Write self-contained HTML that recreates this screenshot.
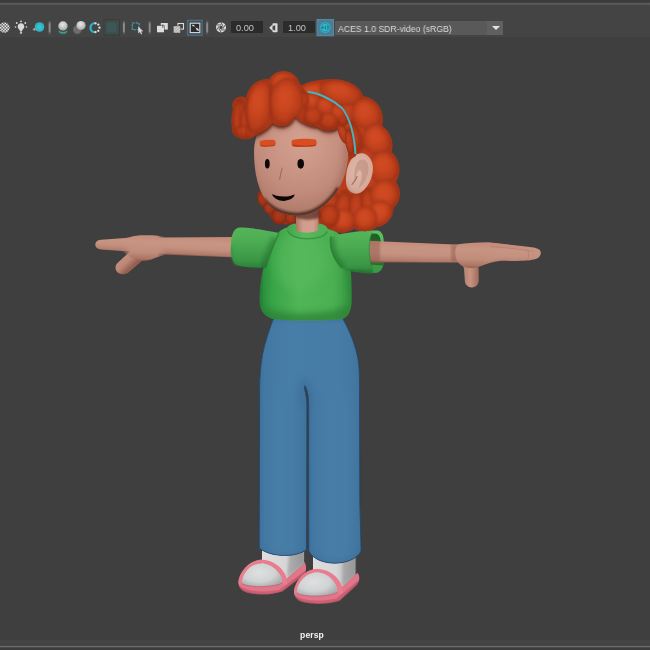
<!DOCTYPE html>
<html>
<head>
<meta charset="utf-8">
<title>persp</title>
<style>
html,body{margin:0;padding:0;}
body{width:650px;height:650px;overflow:hidden;background:#3f3f3f;position:relative;font-family:"Liberation Sans",sans-serif;}
#top0{position:absolute;left:0;top:0;width:650px;height:3px;background:#3b3b3b;}
#top1{position:absolute;left:0;top:2px;width:650px;height:4px;background:linear-gradient(#3b3b3b 0,#4a4a4a 25%,#626262 45%,#565656 65%,#444 100%);}
#bar{position:absolute;left:0;top:5px;width:650px;height:32px;background:#444444;}
#botline{position:absolute;left:0;top:644px;width:650px;height:6px;background:linear-gradient(#404040 0,#404040 16%,#4e4e4e 30%,#6a6a6a 42%,#4c4c4c 58%,#3c3c3c 70%,#3c3c3c 100%);}
#bot2{position:absolute;left:0;top:640px;width:650px;height:4px;background:#444444;}
.fld{position:absolute;top:21px;height:12px;background:#2b2b2b;color:#c4c4c4;font-size:9.2px;line-height:12px;border-radius:1px;}
.fld span{position:absolute;top:0.5px;will-change:transform;}
#aces{position:absolute;left:335px;top:21px;width:152px;height:14px;background:#595959;color:#dcdcdc;font-size:9.3px;line-height:14px;}
#aces span{position:absolute;left:3px;top:0.5px;white-space:nowrap;transform:scaleX(0.932);transform-origin:0 50%;will-change:transform;}
#drop{position:absolute;left:487px;top:21px;width:16px;height:14px;background:#606060;}
#drop i{position:absolute;left:4.5px;top:4.5px;width:0;height:0;border-left:4px solid transparent;border-right:4px solid transparent;border-top:4.5px solid #e4e4e4;}
#persp{position:absolute;left:262px;top:629.300px;will-change:transform;width:100px;text-align:center;color:#f2f2f2;font-weight:bold;font-size:8.6px;line-height:12px;letter-spacing:0.1px;}
svg{position:absolute;left:0;top:0;}
</style>
</head>
<body>
<div id="top0"></div><div id="top1"></div><div id="bar"></div>
<div id="bot2"></div><div id="botline"></div>

<div class="fld" style="left:231px;width:32px;"><span style="left:4.5px;">0.00</span></div>
<div class="fld" style="left:283px;width:32px;"><span style="left:5px;">1.00</span></div>
<div id="aces"><span>ACES 1.0 SDR-video (sRGB)</span></div>
<div id="drop"><i></i></div>
<div id="persp">persp</div>

<!-- TOOLBAR ICONS -->
<svg id="icons" width="650" height="40" viewBox="0 0 650 40">
<!--ICONS-->
<defs>
<pattern id="chk" x="0" y="0" width="3" height="3" patternUnits="userSpaceOnUse"><rect width="3" height="3" fill="#6a6a6a"/><rect width="1.5" height="1.5" fill="#e6e6e6"/><rect x="1.5" y="1.5" width="1.5" height="1.5" fill="#e6e6e6"/></pattern>
<radialGradient id="sph" cx="0.45" cy="0.35" r="0.7"><stop offset="0" stop-color="#e8e8e8"/><stop offset="0.7" stop-color="#b8b8b8"/><stop offset="1" stop-color="#8a8a8a"/></radialGradient>
<linearGradient id="sepg" x1="0" y1="0" x2="0" y2="1"><stop offset="0" stop-color="#6a6a6a" stop-opacity="0"/><stop offset="0.25" stop-color="#8c8c8c"/><stop offset="0.75" stop-color="#8c8c8c"/><stop offset="1" stop-color="#6a6a6a" stop-opacity="0"/></linearGradient>
</defs>
<!-- checker circle -->
<circle cx="4.5" cy="27.5" r="5.2" fill="url(#chk)"/>
<!-- light bulb -->
<g fill="#d8d8d8">
<path d="M21 23.3c-2 0-3.3 1.5-3.3 3.2 0 1.300.7 2.100 1.500 2.900 0.500 0.500 0.700 1.100 0.700 1.800h2.200c0-0.700 0.200-1.300 0.700-1.800 0.800-0.800 1.500-1.600 1.500-2.900 0-1.700-1.300-3.200-3.300-3.200z"/>
<rect x="19.9" y="31.6" width="2.200" height="2.200" rx="0.500" fill="#bdbdbd"/>
<circle cx="21" cy="21.300" r="0.900"/><circle cx="16.700" cy="23" r="0.900"/><circle cx="25.300" cy="23" r="0.900"/><circle cx="15.500" cy="27" r="0.800"/><circle cx="26.500" cy="27" r="0.800"/>
</g>
<!-- teal circle w/ brush -->
<path d="M32.300 29.200l3.500 -1.800 1.500 1.800 -3 1.600z" fill="#c89a84"/>
<circle cx="39.500" cy="27" r="4.800" fill="#2db4c4"/>
<circle cx="39.500" cy="27" r="2.600" fill="#38c2d0"/>
<!-- separators -->
<g fill="url(#sepg)">
<rect x="48.600" y="20" width="2" height="15"/>
<rect x="122.900" y="20" width="2" height="15"/>
<rect x="148.700" y="20" width="2" height="15"/>
<rect x="206.200" y="20" width="2" height="15"/>
</g>
<!-- sphere with teal base -->
<path d="M58.300 30.300q4.700 3.600 9.400 0l-1.200 2.600q-3.500 1.800-7 0z" fill="#3a9a94"/>
<circle cx="63" cy="26" r="4.700" fill="url(#sph)"/>
<!-- sphere with shadow -->
<circle cx="77.300" cy="29.700" r="4.200" fill="#6c6c6c"/>
<circle cx="81" cy="25.500" r="4.600" fill="url(#sph)"/>
<!-- teal ring -->
<path d="M95 23.200a4.500 4.500 0 0 0 0 9" fill="none" stroke="#2db4c4" stroke-width="2.300"/>
<g fill="#e4e4e4"><circle cx="95.600" cy="23.300" r="1.150"/><circle cx="98.300" cy="24.600" r="1.150"/><circle cx="99.500" cy="27.700" r="1.150"/><circle cx="98.300" cy="30.800" r="1.150"/><circle cx="95.600" cy="32.100" r="1.150"/></g>
<!-- dark teal square -->
<rect x="104" y="19.800" width="15.500" height="15.500" fill="#3d4c4c" stroke="#3a3a3a" stroke-width="1"/>
<rect x="107" y="23" width="9.500" height="9" fill="#3f5656"/>
<!-- dashed select + cursor -->
<rect x="132.300" y="23" width="6.800" height="6.800" fill="none" stroke="#3fb4bc" stroke-width="1.100" stroke-dasharray="2.200 1.200"/>
<path d="M138.200 26.400l0 7.200 1.700 -1.600 1.200 2.400 1.100 -0.600 -1.200 -2.300 2.300 -0.200z" fill="#d6d6d6"/>
<!-- overlap squares 1 -->
<rect x="160.800" y="23" width="7" height="6.600" fill="#dedede"/>
<rect x="156.500" y="25.300" width="8" height="7.400" fill="#444"/>
<rect x="157" y="25.800" width="7" height="6.500" fill="#dedede"/>
<rect x="162.400" y="24.300" width="0.900" height="3.600" fill="#555"/>
<!-- overlap squares 2 -->
<rect x="177.900" y="23.500" width="5.600" height="5.600" fill="none" stroke="#dcdcdc" stroke-width="1.100"/>
<rect x="173.200" y="25.700" width="7.500" height="7.500" fill="#444"/>
<rect x="173.700" y="26.200" width="6.500" height="6.500" fill="#cdcdcd"/>
<rect x="173.700" y="26.200" width="6.500" height="6.500" fill="url(#chk)" opacity="0.350"/>
<!-- boxed selected icon -->
<rect x="187.500" y="20.400" width="14.600" height="14.800" fill="#3d4c56" stroke="#50708240" stroke-width="0"/>
<rect x="187.500" y="20.400" width="14.600" height="14.800" fill="none" stroke="#4f6e80" stroke-width="1.300"/>
<rect x="190.200" y="23.200" width="9.600" height="9.400" fill="#2b2b2b" stroke="#dadada" stroke-width="1.100"/>
<path d="M191.800 24.800l3 0.200 -0.900 0.900 2.300 2.300 0.900 -0.400 1.600 1.600 0.300 1.500 -1.500 -0.300 -1.600 -1.600 0.400 -0.900 -2.300 -2.300 -0.900 0.900z" fill="#e2e2e2"/>
<!-- aperture -->
<circle cx="221" cy="27.400" r="5" fill="#dadada"/>
<g stroke="#444" stroke-width="0.800" fill="none">
<path d="M221 22.400l2.200 4.200M225.300 24.900l-2.600 4M225.300 29.900l-4.700 0M221 32.400l-2.200 -4.200M216.700 29.900l2.600 -4M216.700 24.900l4.700 0"/>
</g>
<circle cx="221" cy="27.400" r="1.600" fill="#444"/>
<!-- gamma half -->
<path d="M269.200 27.800l3.300 -3.300 0 6.600z" fill="#dadada"/>
<rect x="272.500" y="23.300" width="5" height="9" rx="0.800" fill="#dadada"/>
<path d="M275.200 25.200a2.600 2.600 0 0 0 0 5.200z" fill="#444"/>
<!-- teal circle button -->
<rect x="317" y="19.500" width="16.500" height="16.300" fill="#4a7d96" stroke="#5e93ac" stroke-width="0.800"/>
<circle cx="325.200" cy="27.600" r="5.300" fill="#35b9c9"/>
<circle cx="325.200" cy="27.600" r="4.200" fill="none" stroke="#1f7f92" stroke-width="0.700"/>
<g fill="#1c6f82"><circle cx="322.800" cy="27.600" r="1.100"/><rect x="324.800" y="25.600" width="0.900" height="4"/><path d="M326.700 25.600a2 2 0 0 1 0 4l0 -0.900a1.100 1.100 0 0 0 0 -2.200z"/></g>
<!--/ICONS-->
</svg>

<!-- CHARACTER -->
<svg id="char" width="650" height="650" viewBox="0 0 650 650">
<defs>
<!--DEFS-->
<filter id="b1" x="-10%" y="-10%" width="120%" height="120%"><feGaussianBlur stdDeviation="1"/></filter>
<filter id="b2" x="-30%" y="-30%" width="160%" height="160%"><feGaussianBlur stdDeviation="2"/></filter>
<filter id="b3" x="-30%" y="-30%" width="160%" height="160%"><feGaussianBlur stdDeviation="3.2"/></filter>
<filter id="b5" x="-40%" y="-40%" width="180%" height="180%"><feGaussianBlur stdDeviation="5"/></filter>
<filter id="b05" x="-20%" y="-20%" width="140%" height="140%"><feGaussianBlur stdDeviation="0.5"/></filter>
<radialGradient id="hg" cx="0.5" cy="0.5" r="0.5" fx="0.36" fy="0.32"><stop offset="0" stop-color="#d04a22"/><stop offset="0.5" stop-color="#c8441e"/><stop offset="0.85" stop-color="#b53b1a"/><stop offset="1" stop-color="#a03317"/></radialGradient>
<radialGradient id="hg2" cx="0.5" cy="0.5" r="0.5" fx="0.4" fy="0.35"><stop offset="0" stop-color="#c4421d"/><stop offset="0.6" stop-color="#b53b1a"/><stop offset="1" stop-color="#982f15"/></radialGradient>
<radialGradient id="faceg" cx="0.5" cy="0.3" r="0.75"><stop offset="0" stop-color="#d3a08f"/><stop offset="0.35" stop-color="#cb9685"/><stop offset="0.65" stop-color="#c18b7b"/><stop offset="0.88" stop-color="#b07c6c"/><stop offset="1" stop-color="#9c6a5c"/></radialGradient>
<linearGradient id="armL" gradientUnits="userSpaceOnUse" x1="200" y1="236.500" x2="199" y2="257"><stop offset="0" stop-color="#c48a78"/><stop offset="0.3" stop-color="#c89583"/><stop offset="0.6" stop-color="#c49180"/><stop offset="0.88" stop-color="#b07a69"/><stop offset="1" stop-color="#744438"/></linearGradient>
<linearGradient id="armR" gradientUnits="userSpaceOnUse" x1="420" y1="241.500" x2="419.500" y2="264"><stop offset="0" stop-color="#c48a78"/><stop offset="0.3" stop-color="#c89583"/><stop offset="0.6" stop-color="#c49180"/><stop offset="0.88" stop-color="#b07a69"/><stop offset="1" stop-color="#744438"/></linearGradient>
<linearGradient id="neckg" x1="0" y1="0" x2="1" y2="0"><stop offset="0" stop-color="#a87463"/><stop offset="0.3" stop-color="#cf9d8c"/><stop offset="0.75" stop-color="#d2a08f"/><stop offset="1" stop-color="#b98675"/></linearGradient>
<linearGradient id="torsog" x1="0" y1="0" x2="1" y2="0"><stop offset="0" stop-color="#27883a"/><stop offset="0.14" stop-color="#38a447"/><stop offset="0.42" stop-color="#50b556"/><stop offset="0.8" stop-color="#4bb052"/><stop offset="1" stop-color="#33973f"/></linearGradient>
<linearGradient id="slvg" x1="0" y1="0" x2="0" y2="1"><stop offset="0" stop-color="#55b55a"/><stop offset="0.35" stop-color="#4bac52"/><stop offset="0.8" stop-color="#3b9745"/><stop offset="1" stop-color="#2a8237"/></linearGradient>
<linearGradient id="legg" x1="0" y1="0" x2="1" y2="0"><stop offset="0" stop-color="#2c5880"/><stop offset="0.1" stop-color="#3c6f98"/><stop offset="0.4" stop-color="#4b83ad"/><stop offset="0.72" stop-color="#467ca6"/><stop offset="0.93" stop-color="#396a93"/><stop offset="1" stop-color="#2b547b"/></linearGradient>
<radialGradient id="toeg" cx="0.42" cy="0.4" r="0.65"><stop offset="0" stop-color="#dfe1e1"/><stop offset="0.6" stop-color="#d0d3d3"/><stop offset="1" stop-color="#a9adad"/></radialGradient>
<linearGradient id="sockg" x1="0" y1="0" x2="1" y2="0"><stop offset="0" stop-color="#dedede"/><stop offset="0.55" stop-color="#d6d6d6"/><stop offset="1" stop-color="#a2a2a2"/></linearGradient>
<linearGradient id="thL" gradientUnits="userSpaceOnUse" x1="117" y1="258" x2="128" y2="270"><stop offset="0" stop-color="#c89583"/><stop offset="0.6" stop-color="#bd8775"/><stop offset="1" stop-color="#94604f"/></linearGradient>
<linearGradient id="thR" gradientUnits="userSpaceOnUse" x1="464" y1="275" x2="480" y2="275"><stop offset="0" stop-color="#b58371"/><stop offset="0.4" stop-color="#c69381"/><stop offset="1" stop-color="#9a6655"/></linearGradient>
<linearGradient id="palmL" gradientUnits="userSpaceOnUse" x1="147" y1="235" x2="146" y2="261.500"><stop offset="0" stop-color="#c48a78"/><stop offset="0.25" stop-color="#c89583"/><stop offset="0.65" stop-color="#c18d7b"/><stop offset="0.9" stop-color="#aa7463"/><stop offset="1" stop-color="#8e5a4c"/></linearGradient>
<linearGradient id="palmR" gradientUnits="userSpaceOnUse" x1="478" y1="242.500" x2="477" y2="268.500"><stop offset="0" stop-color="#c48a78"/><stop offset="0.25" stop-color="#c89583"/><stop offset="0.65" stop-color="#c18d7b"/><stop offset="0.9" stop-color="#aa7463"/><stop offset="1" stop-color="#8e5a4c"/></linearGradient>
<linearGradient id="fadeL" gradientUnits="userSpaceOnUse" x1="122" y1="0" x2="167" y2="0"><stop offset="0" stop-color="#000"/><stop offset="0.22" stop-color="#fff"/><stop offset="0.78" stop-color="#fff"/><stop offset="1" stop-color="#000"/></linearGradient>
<mask id="palmLm" maskUnits="userSpaceOnUse" x="120" y="230" width="50" height="40"><rect x="120" y="230" width="50" height="40" fill="url(#fadeL)"/></mask>
<linearGradient id="fadeR" gradientUnits="userSpaceOnUse" x1="490" y1="0" x2="503" y2="0"><stop offset="0" stop-color="#fff"/><stop offset="1" stop-color="#000"/></linearGradient>
<mask id="palmRm" maskUnits="userSpaceOnUse" x="450" y="238" width="56" height="34"><rect x="450" y="238" width="56" height="34" fill="url(#fadeR)"/></mask>
<clipPath id="pantsclip"><use href="#pantsp"/></clipPath>
<linearGradient id="hipg" x1="0" y1="0" x2="1" y2="0"><stop offset="0" stop-color="#2c5880"/><stop offset="0.07" stop-color="#3c6f98"/><stop offset="0.3" stop-color="#4b83ad"/><stop offset="0.8" stop-color="#467ca6"/><stop offset="0.95" stop-color="#396a93"/><stop offset="1" stop-color="#2b547b"/></linearGradient>
<linearGradient id="hipfade" x1="0" y1="0" x2="0" y2="1"><stop offset="0" stop-color="#fff"/><stop offset="0.75" stop-color="#fff"/><stop offset="1" stop-color="#000"/></linearGradient>
<mask id="hipmask"><rect x="250" y="310" width="120" height="95" fill="url(#hipfade)"/></mask>
<clipPath id="torsoclip"><use href="#torsop"/></clipPath>
<clipPath id="lslvclip"><use href="#lslv"/></clipPath>
<clipPath id="rslvclip"><use href="#rslv"/></clipPath>
<radialGradient id="hl" cx="0.5" cy="0.5" r="0.5" fx="0.4" fy="0.36"><stop offset="0" stop-color="#d24c23"/><stop offset="0.5" stop-color="#c9451f"/><stop offset="0.8" stop-color="#b83d1b"/><stop offset="1" stop-color="#a33418"/></radialGradient>
<radialGradient id="hd" cx="0.5" cy="0.5" r="0.5" fx="0.42" fy="0.38"><stop offset="0" stop-color="#c4421d"/><stop offset="0.55" stop-color="#b63c1a"/><stop offset="1" stop-color="#952e14"/></radialGradient>
<clipPath id="backclip"><path d="M296,90 C300,84 312,80.500 324,79.500 C336,78.500 347,80 354,85 C359,88 362,92 363,96 A23.700,23.700 0 0 1 382,126 A23.600,23.600 0 0 1 391.500,152 A23.600,23.600 0 0 1 396,182 A19.400,19.400 0 0 1 393.500,208 A19.600,19.600 0 0 1 377,227 A20.600,20.600 0 0 1 354,228.500 A19,19 0 0 1 334,231 L318,225.500 L315,217 L315,203 L320,150 Z"/></clipPath>
<radialGradient id="hdd" cx="0.5" cy="0.5" r="0.5" fx="0.42" fy="0.38"><stop offset="0" stop-color="#b03a1a"/><stop offset="0.6" stop-color="#a03317"/><stop offset="1" stop-color="#852812"/></radialGradient>
<linearGradient id="colg" x1="0" y1="0" x2="1" y2="0"><stop offset="0" stop-color="#44a34b"/><stop offset="0.4" stop-color="#5ab95e"/><stop offset="1" stop-color="#4dae53"/></linearGradient>
<radialGradient id="earg" cx="0.45" cy="0.4" r="0.7"><stop offset="0" stop-color="#dfb8aa"/><stop offset="0.7" stop-color="#d6aa9b"/><stop offset="1" stop-color="#bd8d7d"/></radialGradient>
<clipPath id="faceclip"><use href="#facep"/></clipPath>
<clipPath id="frclip"><path d="M232,127 A40,40 0 0 1 233,109 A9,9 0 0 1 246,98 A22,22 0 0 1 269.500,79 A16.500,16.500 0 0 1 299,82 L306,92 C318,93 332,99 341,107 C346,112 349,116 349,119 A7,7 0 0 1 339,126.500 A16.400,16.400 0 0 1 318,127 A40,40 0 0 1 294.500,116.500 A14,14 0 0 1 272.500,123 A40,40 0 0 1 256.500,134.500 A16,16 0 0 1 238,137.500 A9,9 0 0 1 232,127 Z"/></clipPath>
</defs>
<!--CHAR-->
<path d="M370,230.500 L378,230.500 C382,231.500 383.800,236 383.700,241 L383.600,262 C383.600,267 381,271.500 377,272.800 L370,273.200 Z" fill="#1f5f28"/>
<path d="M371.500,230.500 L378,230.500 C382,231.500 383.800,236 383.700,241 L383.600,244 L380.800,244 C381,238.500 379.500,234.800 376.500,233.800 L371.500,233.600 Z" fill="#5cbc60"/>
<path d="M369,261 L383.600,262.500 C383.600,267 381,271.500 377,272.800 L370,273.200 Z" fill="#3d9946"/>
<path d="M369,261.500 L383.600,263 L383.600,265.500 L369,264.500 Z" fill="#1f5f28" opacity="0.700" filter="url(#b05)"/>
<g id="arms">
<path d="M131,250.500 L117.500,263 C114.600,265.800 115,270.400 118,272.800 C121.400,275.200 126.400,274.600 129.600,271.600 L143.500,259.500 Z" fill="url(#thL)"/>
<path d="M236,237 L160,237.600 L129,237.700 L101,239.700 C97,240 95.300,242.400 95.300,244.600 C95.300,247 97,249.200 101,249.500 L129,251.500 L160,254.600 L236,257.400 Z" fill="url(#armL)"/>
<path d="M122,238.300 C130,237.500 135,235.400 140,235.200 L152,235.200 C157,235.300 161,236.500 167,237.600 L167,254.600 C161,255.400 156,258 151.500,259.400 C147,260.600 143,261.200 139,260.600 C133,259.400 127,255 122,251.100 Z" fill="url(#palmL)" mask="url(#palmLm)"/>
<path d="M462,262 L464,269 L464.800,280 C464.800,284.200 467.200,287.200 471.700,287.400 C476,287.500 478.800,284.500 478.800,280 L478.500,264 Z" fill="url(#thR)"/>
<path d="M366,240.800 L455,244.400 L488,242.600 C500,243.400 520,245.600 534,247.400 C539,248.400 541.200,250.600 540.800,253.400 C540.400,256.600 538,258.800 534,259.600 C528,261.200 515,261.200 501,260.800 L488,262 L455,262.400 L366,262.600 Z" fill="url(#armR)"/>
<path d="M451,245 L457,245 L457,262 L451,262 Z" fill="#8a5848" opacity="0.450" filter="url(#b1)"/>
<path d="M455.300,252 C455.300,247 458,244.400 462,243.800 C470,242.800 480,242.400 488.500,242.500 L503,244 L503,260.800 C495,261.400 486,263.600 478.500,267 C472,268.800 465,267.800 461,265.200 C457.500,262.800 455.300,258 455.300,252 Z" fill="url(#palmR)" mask="url(#palmRm)"/>
<path d="M369,240 L380,241 L380,263 L369,263 Z" fill="#8a5848" opacity="0.450" filter="url(#b1)"/>
<path d="M490,246.500 C505,247.500 522,249.500 534,251.500" stroke="#a87462" stroke-width="0.800" fill="none" opacity="0.600"/>
<path d="M527,249.500 C529,252 529,256 527.500,259.500" stroke="#a06c5b" stroke-width="0.800" fill="none" opacity="0.500"/>
</g>
<g id="feet">
<path d="M238.400,583 C238.400,574 247,561.500 260,559.800 C270,559.300 279,564 284.500,572 L304.500,562 C306.300,565 306.400,569 305.400,571.800 L283,590.200 C276,593.600 264,594.800 254,593.200 C245,591.800 238.600,588.500 238.400,583 Z" fill="#e07688"/>
<path d="M262,547 L304,547 L304,563.500 L285.500,579.500 L276,584 L262,572 Z" fill="url(#sockg)"/>
<path d="M290,548 L304,548 L304,563.500 L287,578 Z" fill="#8a8a8a" opacity="0.450" filter="url(#b1)"/>
<path d="M239,585.500 C246,591 262,593 279,590 L305.400,570.500 C305.600,572.500 304.500,574.500 303,576 L282.500,591.500 C272,595.200 258,595.400 248,593 C243,591.500 239.500,589 239,585.500 Z" fill="#c65a6e" opacity="0.800"/>
<path d="M238.400,583.500 C238.400,574 247,561.500 260,559.800 C271,559.300 280,565 285,574 C286.600,577.500 287.400,581 287.200,584.500 L282.800,584.500 C282.500,574.500 272,563.600 261,563.600 C250,563.800 241.800,574 241.800,584.500 Z" fill="#e97c8e"/>
<path d="M241.800,583.500 C241.800,574 250,563.600 261,563.400 C272,563.400 282,573 282.800,582.500 C276,587.200 250,588.400 241.800,583.500 Z" fill="url(#toeg)"/>
<path d="M241.800,583.500 C250,588.400 276,587.200 282.800,582.500" stroke="#c25a6c" stroke-width="1" fill="none" opacity="0.700"/>
<path d="M294,593 C294,583 303,570 316,569 C327,568.600 336,574 340.500,582 L357.800,573 C359.800,576 359.600,579.500 358.600,581.500 L340,599.500 C332,603 320,603.800 310,602.600 C301,601.200 294.200,598 294,593 Z" fill="#e07688"/>
<path d="M313,552 L355.500,552 L355.500,574.500 L341,588 L333,593 L313,580 Z" fill="url(#sockg)"/>
<path d="M343,553 L355.500,553 L355.500,574.500 L342,587 Z" fill="#8a8a8a" opacity="0.450" filter="url(#b1)"/>
<path d="M295,595.500 C302,600.500 318,602.200 336,598.800 L358.700,580 C358.800,582.500 357.500,584.500 356,586 L339.500,601 C329,604.600 314,604.800 304,602.600 C299,601.200 295.500,599 295,595.500 Z" fill="#c65a6e" opacity="0.800"/>
<path d="M294,593.500 C294,583 303,570 316,569 C327,568.600 336,574.500 340.500,583 C342,586.500 343,590 343,593.500 L337.800,593.500 C337.500,583.500 328,572.600 316.500,572.600 C305,572.800 296.500,583 296.500,593.500 Z" fill="#e97c8e"/>
<path d="M296.500,593 C296.500,584 305,572.600 316.500,572.400 C328,572.400 337,582 337.700,592 C331,596.800 305,597.800 296.500,593 Z" fill="url(#toeg)"/>
<path d="M296.500,593 C305,597.800 331,596.800 337.700,592" stroke="#c25a6c" stroke-width="1" fill="none" opacity="0.700"/>
</g>
<g id="pants">
<path id="pantsp" d="M274,317 L342,317 C349,330 356,345 358.500,362 C360,375 359.600,390 359.500,400 L359.800,500 L361.200,551 C353,567 317,567.500 308.700,551 L308.600,405 C308.600,395 307,388 304.600,385.600 C303.500,388 307,395 307,405 L306.600,549.400 C297,558 270,557.500 259.200,548 L259.600,390 C259.600,378 260.400,365 262.600,354 C265,342 270,328 274,317 Z" fill="#467ca6"/>
<g clip-path="url(#pantsclip)">
<rect x="259" y="380" width="48" height="185" fill="url(#legg)"/>
<rect x="308.600" y="380" width="53" height="190" fill="url(#legg)"/>
<rect x="258" y="310" width="104" height="95" fill="url(#hipg)" mask="url(#hipmask)"/>
<ellipse cx="305" cy="392" rx="7" ry="16" fill="#2a5078" opacity="0.55" filter="url(#b3)"/>
<path d="M307.800,395 L307.800,552" stroke="#27496e" stroke-width="2.400" opacity="0.800" filter="url(#b05)"/>
<rect x="262" y="314" width="92" height="7" fill="#28507a" opacity="0.600" filter="url(#b2)"/>
<path d="M258,546 C270,560 297,560 308,548 L308,570 L258,570 Z" fill="#2a5078" opacity="0.350" filter="url(#b2)" transform="translate(0,-3)"/>
<path d="M308,549 C320,566 350,566 362,550 L362,575 L308,575 Z" fill="#2a5078" opacity="0.350" filter="url(#b2)" transform="translate(0,-3)"/>
</g>
<use href="#pantsp" fill="none" stroke="#1f3f62" stroke-width="1" opacity="0.700"/>
</g>
<g id="shirt">
<path id="torsop" d="M279,232 C283,228 290,226 298,226 L322,226 C334,227 345,236 349,252 C351,266 351.800,285 351.600,300 C351.600,310 349,316 343,318.500 C335,320.500 320,320.500 306,320.500 C292,320.500 282,320.300 275,319.200 C266,317.500 260,312 259.600,302 C259.600,292 260.500,278 263.500,268 C266,254 272,240 279,232 Z" fill="url(#torsog)"/>
<g clip-path="url(#torsoclip)">
<path d="M258,306 C280,316 330,316 353,304 L353,325 L258,325 Z" fill="#2a7d34" opacity="0.700" filter="url(#b3)"/>
<ellipse cx="300" cy="262" rx="26" ry="30" fill="#5cbc60" opacity="0.500" filter="url(#b5)"/>
<path d="M345,262 C350,270 352,285 352,305" stroke="#1f6e2b" stroke-width="7" fill="none" opacity="0.400" filter="url(#b3)"/>
<path d="M262,270 C260,282 259,295 259.500,308" stroke="#1f6e2b" stroke-width="5" fill="none" opacity="0.400" filter="url(#b2)"/>
</g>
<path id="lslv" d="M239,227.600 C250,227.600 266,230 279,233 C275,243 269,256 266,267.600 C257,268.400 246,267.600 238,265.600 C233,264 231,258 231,247 C231,236 233,228.600 239,227.600 Z" fill="url(#slvg)"/>
<g clip-path="url(#lslvclip)"><path d="M233,268 L268,270" stroke="#1a5f25" stroke-width="6" fill="none" opacity="0.450" filter="url(#b2)"/><path d="M276,238 C271,248 267,258 264,268" stroke="#1a5f25" stroke-width="8" fill="none" opacity="0.400" filter="url(#b2)"/></g>
<path d="M279,233 C274,243 269,256 266,267.600" stroke="#2a7d34" stroke-width="1.600" fill="none" opacity="0.700" filter="url(#b05)"/>
<path d="M231.500,247 C231.500,258 233,263.500 238,265.400" stroke="#2f8a3a" stroke-width="2" fill="none" opacity="0.600" filter="url(#b1)"/>
<path id="rslv" d="M331,236.500 C340,233.600 355,231.200 371.800,230.500 C372.500,231.500 372.500,232.500 371.800,233.500 C370.400,236 369.800,239 369.600,243 C369.200,249 369.300,256 370.200,261 C370.800,265 371.600,268.500 373,271.500 C373.400,272.400 373.400,273 372.500,273.200 C362,273.400 350,271.800 342,268 C334,260 329,248 331,236.500 Z" fill="url(#slvg)"/>
<g clip-path="url(#rslvclip)"><path d="M332,236.500 C330,248 335,260 343,268" stroke="#1f6e2b" stroke-width="7" fill="none" opacity="0.500" filter="url(#b2)"/><path d="M340,271 L373,275" stroke="#1a5f25" stroke-width="6" fill="none" opacity="0.500" filter="url(#b2)"/></g>
<path d="M331,236.500 C329,248 334,260 342,268" stroke="#2a7d34" stroke-width="1.800" fill="none" opacity="0.800" filter="url(#b05)"/>
<path d="M371.800,233.500 C370.400,236 369.800,239 369.600,243 C369.200,249 369.300,256 370.200,261 C370.800,265 371.600,268.500 373,271.500" stroke="#2f8038" stroke-width="1.200" fill="none" opacity="0.600"/>
</g>
<g id="hairback">
<path d="M296,90 C300,84 312,80.500 324,79.500 C336,78.500 347,80 354,85 C359,88 362,92 363,96 A23.700,23.700 0 0 1 382,126 A23.600,23.600 0 0 1 391.500,152 A23.600,23.600 0 0 1 396,182 A19.400,19.400 0 0 1 393.500,208 A19.600,19.600 0 0 1 377,227 A20.600,20.600 0 0 1 354,228.500 A19,19 0 0 1 334,231 L318,225.500 L315,217 L315,203 L320,150 Z" fill="#b83d1b"/>
<g clip-path="url(#backclip)"><g filter="url(#b1)">
<ellipse cx="350" cy="112" rx="12" ry="13" fill="url(#hd)" opacity="1" transform="rotate(0 350 112)"/>
<ellipse cx="361" cy="134" rx="12" ry="14" fill="url(#hd)" opacity="1" transform="rotate(-10 361 134)"/>
<ellipse cx="368" cy="158" rx="12" ry="14" fill="url(#hd)" opacity="1" transform="rotate(-5 368 158)"/>
<ellipse cx="352" cy="140" rx="10" ry="16" fill="url(#hd)" opacity="1" transform="rotate(0 352 140)"/>
<ellipse cx="370" cy="182" rx="11" ry="14" fill="url(#hd)" opacity="1" transform="rotate(0 370 182)"/>
<ellipse cx="330" cy="208" rx="8" ry="17" fill="url(#hd)" opacity="1" transform="rotate(15 330 208)"/>
<ellipse cx="343" cy="209" rx="8.5" ry="19" fill="url(#hd)" opacity="1" transform="rotate(8 343 209)"/>
<ellipse cx="357" cy="209" rx="8.5" ry="19" fill="url(#hd)" opacity="1" transform="rotate(0 357 209)"/>
<ellipse cx="370" cy="206" rx="9" ry="19" fill="url(#hd)" opacity="1" transform="rotate(-10 370 206)"/>
<ellipse cx="314" cy="92" rx="16" ry="11.5" fill="url(#hl)" opacity="1" transform="rotate(-5 314 92)"/>
<ellipse cx="341" cy="92" rx="22" ry="13" fill="url(#hl)" opacity="1" transform="rotate(14 341 92)"/>
<ellipse cx="367" cy="113" rx="15.5" ry="16" fill="url(#hl)" opacity="1" transform="rotate(-20 367 113)"/>
<ellipse cx="377.5" cy="139" rx="15" ry="16" fill="url(#hl)" opacity="1" transform="rotate(-10 377.5 139)"/>
<ellipse cx="384" cy="167" rx="15.5" ry="16.5" fill="url(#hl)" opacity="1" transform="rotate(0 384 167)"/>
<ellipse cx="385" cy="195" rx="15" ry="15.5" fill="url(#hl)" opacity="1" transform="rotate(0 385 195)"/>
<ellipse cx="380.5" cy="214" rx="13.5" ry="14" fill="url(#hl)" opacity="1" transform="rotate(20 380.5 214)"/>
<ellipse cx="365.5" cy="219" rx="12" ry="13" fill="url(#hl)" opacity="1" transform="rotate(0 365.5 219)"/>
<ellipse cx="343.5" cy="220.5" rx="11.5" ry="12" fill="url(#hl)" opacity="1" transform="rotate(0 343.5 220.5)"/>
<ellipse cx="329.5" cy="216" rx="10.5" ry="12" fill="url(#hd)" opacity="1" transform="rotate(10 329.5 216)"/>
</g>
<path d="M296,90 C300,84 312,80.500 324,79.500 C336,78.500 347,80 354,85 C359,88 362,92 363,96 A23.700,23.700 0 0 1 382,126 A23.600,23.600 0 0 1 391.500,152 A23.600,23.600 0 0 1 396,182 A19.400,19.400 0 0 1 393.500,208 A19.600,19.600 0 0 1 377,227 A20.600,20.600 0 0 1 354,228.500 A19,19 0 0 1 334,231 L318,225.500 L315,217 L315,203 L320,150 Z" fill="none" stroke="#8c2a12" stroke-width="4" opacity="0.550" filter="url(#b2)"/>
</g>
</g>
<path d="M258,192 C257,199 260,205 266.500,209 C268,216 275,222.500 285,224.500 C292,225 296,221 297,216 L290,205 L262,190 Z" fill="#9a3016"/>
<ellipse cx="262.5" cy="199.5" rx="5" ry="7.5" fill="url(#hdd)" opacity="1" transform="rotate(-15 262.5 199.5)"/>
<ellipse cx="269.5" cy="208.5" rx="5.5" ry="6.5" fill="url(#hdd)" opacity="1" transform="rotate(-30 269.5 208.5)"/>
<ellipse cx="279.5" cy="216.5" rx="8" ry="8" fill="url(#hdd)" opacity="1" transform="rotate(0 279.5 216.5)"/>
<ellipse cx="291" cy="218" rx="6" ry="6.5" fill="url(#hdd)" opacity="1" transform="rotate(0 291 218)"/>
<path d="M296,205 L318.500,205 L318.500,233 L296,233 Z" fill="url(#neckg)"/>
<path d="M294,206 L320,206 L320,217.500 C312,220.500 302,220.500 294,216.500 Z" fill="#5a2f24" opacity="0.750" filter="url(#b1)"/>
<path d="M287,229 C287,226 290,224 296,223.400 L296,230 C302,233.500 312,233.500 318.500,230 L318.500,223.400 C324,224 327.500,226 327.800,229.500 C327.800,235 318,238.500 307,238.500 C296,238.500 287,235 287,229 Z" fill="url(#colg)"/>
<path d="M287.500,231 C290,236 298,238.800 307,238.800 C317,238.800 325,236 327.500,231.500" stroke="#2f8a3a" stroke-width="1.400" fill="none" opacity="0.700" filter="url(#b05)"/>
<g id="head">
<path d="M346,182 C345.500,172 348,162 354,156 C357,153.600 360,153 362.500,153.300 C368,154 373,160 373,168.500 C373,175 370,184 364,190 C361,192.800 358,194 355.500,193.800 C350,193 346.500,189 346,182 Z" fill="url(#earg)"/>
<path d="M354.500,178 C354,169 356,161 361.500,159.500 C366.500,159 369,164 368.500,170 C368,177 364,185 358,188.500 C361,183 362.500,177 361.500,172.500 C360.500,169 358,170 356.800,173.500 C356,176 356,178 354.500,181.500 Z" fill="#b98a7a" opacity="0.550" filter="url(#b05)"/>
<path d="M352,184.500 C354,182 356,180 357,176.500" stroke="#8e5e50" stroke-width="1.100" fill="none" opacity="0.800" stroke-linecap="round"/>
<path id="facep" d="M254,152 C254,172 258,192 269,205 C278,214.500 292,216.500 302,215.600 C316,214 330,203 339,188 C346,176 349,160 348,146 C346,124 330,110 300,109 C268,109 254,130 254,152 Z" fill="url(#faceg)"/>
<g clip-path="url(#faceclip)">
<path d="M232,127 A40,40 0 0 1 233,109 A9,9 0 0 1 246,98 A22,22 0 0 1 269.500,79 A16.500,16.500 0 0 1 299,82 L306,92 C318,93 332,99 341,107 C346,112 349,116 349,119 A7,7 0 0 1 339,126.500 A16.400,16.400 0 0 1 318,127 A40,40 0 0 1 294.500,116.500 A14,14 0 0 1 272.500,123 A40,40 0 0 1 256.500,134.500 A16,16 0 0 1 238,137.500 A9,9 0 0 1 232,127 Z" fill="#4a1a10" opacity="0.800" filter="url(#b1)" transform="translate(0.500,2.200)"/>
<path d="M232,127 A40,40 0 0 1 233,109 A9,9 0 0 1 246,98 A22,22 0 0 1 269.500,79 A16.500,16.500 0 0 1 299,82 L306,92 C318,93 332,99 341,107 C346,112 349,116 349,119 A7,7 0 0 1 339,126.500 A16.400,16.400 0 0 1 318,127 A40,40 0 0 1 294.500,116.500 A14,14 0 0 1 272.500,123 A40,40 0 0 1 256.500,134.500 A16,16 0 0 1 238,137.500 A9,9 0 0 1 232,127 Z" fill="#6a3020" opacity="0.350" filter="url(#b2)" transform="translate(0.500,4)"/>
<path d="M349,120 L352,190 L330,215 L316,212 C334,200 345,176 344,150 Z" fill="#8a5646" opacity="0.400" filter="url(#b3)"/>
<path d="M252,150 C252,175 258,198 272,210 L262,212 L250,190 Z" fill="#8a5646" opacity="0.450" filter="url(#b2)"/>
<path d="M263,199 C272,210.500 286,215 300,214.600 C315,213.500 329,203.500 338.500,188" stroke="#3a1a12" stroke-width="4" fill="none" opacity="0.800" filter="url(#b1)"/>
</g>
<path d="M335,124 L349,117 C353,128 355.500,142 356,156 L349.500,160 C348,150 344,138 337,128 Z" fill="#a33418"/>
<ellipse cx="343" cy="133" rx="4.5" ry="11" fill="url(#hd)" opacity="1" transform="rotate(-18 343 133)"/>
<ellipse cx="349.5" cy="142" rx="4" ry="13" fill="url(#hd)" opacity="1" transform="rotate(-8 349.5 142)"/>
<ellipse cx="347" cy="124" rx="4.5" ry="7" fill="url(#hd)" opacity="1" transform="rotate(-25 347 124)"/>
<path d="M260.300,141 C264,139.600 271,139.400 274.800,140.200 C276,142 276,144.400 274.800,146 C270,147 264,147.200 260.600,146.600 C259.400,145 259.400,142.600 260.300,141 Z" fill="#d84e20"/>
<path d="M292.200,140 C298,138.400 310,138.200 315.700,139.400 C317,141.300 317,144 315.700,146 C309,147.200 298,147.400 292.500,146.400 C291.200,144.600 291.200,142 292.200,140 Z" fill="#d84e20"/>
<path d="M293,144.500 C300,146 310,146 315.800,144.500 L315.500,145.800 C309,147 298,147 292.800,146 Z" fill="#9a3516" opacity="0.700"/>
<path d="M260.800,144.800 C265,146 270,146 274.800,144.600 L274.500,145.600 C270,146.600 264,146.600 260.800,146 Z" fill="#9a3516" opacity="0.700"/>
<ellipse cx="267.300" cy="163.800" rx="2.400" ry="4.800" fill="#0c0908"/>
<ellipse cx="300.700" cy="163.800" rx="3.300" ry="4.900" fill="#0c0908"/>
<path d="M282.200,168 C281,172 280,176 279.800,179.500" stroke="#8e5a4b" stroke-width="1" fill="none" stroke-linecap="round" opacity="0.750"/>
<path d="M271.800,194 C273,194.400 274.500,195.300 276.500,195.800 C281,196.800 286,196.800 290,196 C292,195.500 293.500,194.800 294.700,194.600 C294.200,197.500 290,200.600 284,200.900 C278,200.900 273.500,198 271.800,194 Z" fill="#0c0706"/>
</g>
<g id="hairfront">
<path d="M232,127 A40,40 0 0 1 233,109 A9,9 0 0 1 246,98 A22,22 0 0 1 269.500,79 A16.500,16.500 0 0 1 299,82 L306,92 C318,93 332,99 341,107 C346,112 349,116 349,119 A7,7 0 0 1 339,126.500 A16.400,16.400 0 0 1 318,127 A40,40 0 0 1 294.500,116.500 A14,14 0 0 1 272.500,123 A40,40 0 0 1 256.500,134.500 A16,16 0 0 1 238,137.500 A9,9 0 0 1 232,127 Z" fill="#b83d1b"/>
<g clip-path="url(#frclip)"><g filter="url(#b1)">
<ellipse cx="238.5" cy="118" rx="7" ry="20" fill="url(#hd)" opacity="1" transform="rotate(5 238.5 118)"/>
<ellipse cx="247" cy="121" rx="7.5" ry="18" fill="url(#hd)" opacity="1" transform="rotate(5 247 121)"/>
<ellipse cx="243" cy="132" rx="8" ry="7" fill="url(#hd)" opacity="1" transform="rotate(0 243 132)"/>
<ellipse cx="252" cy="132" rx="7" ry="7" fill="url(#hd)" opacity="1" transform="rotate(0 252 132)"/>
<ellipse cx="342" cy="118" rx="7.5" ry="8" fill="url(#hd)" opacity="1" transform="rotate(0 342 118)"/>
<ellipse cx="329" cy="120" rx="11" ry="11" fill="url(#hd)" opacity="1" transform="rotate(0 329 120)"/>
<ellipse cx="313" cy="116" rx="10" ry="11" fill="url(#hd)" opacity="1" transform="rotate(20 313 116)"/>
<ellipse cx="312" cy="100" rx="9.5" ry="9.5" fill="url(#hl)" opacity="1" transform="rotate(0 312 100)"/>
<ellipse cx="326" cy="105" rx="10" ry="9.5" fill="url(#hl)" opacity="1" transform="rotate(15 326 105)"/>
<ellipse cx="339" cy="111" rx="8.5" ry="8" fill="url(#hl)" opacity="1" transform="rotate(30 339 111)"/>
<ellipse cx="283.5" cy="80.5" rx="15" ry="10.5" fill="url(#hl)" opacity="1" transform="rotate(0 283.5 80.5)"/>
<ellipse cx="302" cy="100" rx="7" ry="10" fill="url(#hd)" opacity="1" transform="rotate(0 302 100)"/>
<ellipse cx="258.5" cy="106" rx="13.5" ry="27.5" fill="url(#hl)" opacity="1" transform="rotate(8 258.5 106)"/>
<ellipse cx="286.5" cy="102" rx="17" ry="24.5" fill="url(#hl)" opacity="1" transform="rotate(3 286.5 102)"/>
<path d="M271,84 C269.500,96 270,110 272,122" stroke="#8a2a12" stroke-width="1.800" fill="none" opacity="0.650"/>
<path d="M247.500,97 C245.500,108 246.500,122 251,134" stroke="#8a2a12" stroke-width="2" fill="none" opacity="0.600"/>
<path d="M240,100 C238.500,112 239.500,126 242,136" stroke="#8a2a12" stroke-width="1.500" fill="none" opacity="0.450"/>
</g>
<path d="M232,127 A40,40 0 0 1 233,109 A9,9 0 0 1 246,98 A22,22 0 0 1 269.500,79 A16.500,16.500 0 0 1 299,82 L306,92 C318,93 332,99 341,107 C346,112 349,116 349,119 A7,7 0 0 1 339,126.500 A16.400,16.400 0 0 1 318,127 A40,40 0 0 1 294.500,116.500 A14,14 0 0 1 272.500,123 A40,40 0 0 1 256.500,134.500 A16,16 0 0 1 238,137.500 A9,9 0 0 1 232,127 Z" fill="none" stroke="#8c2a12" stroke-width="4" opacity="0.500" filter="url(#b2)"/>
</g>
<path d="M307.500,91.800 C318,93 332,99 342,108 C350,118 354,132 355.500,154" stroke="#46b4bf" stroke-width="2" fill="none"/>
</g>
</svg>
</body>
</html>
